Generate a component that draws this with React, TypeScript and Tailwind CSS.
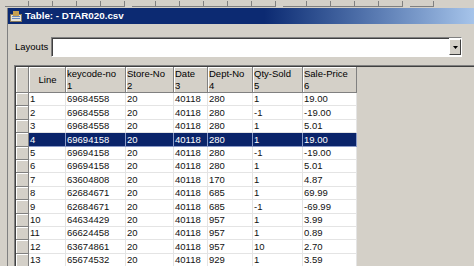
import React from 'react'

// column widths measured off the grid: selector, Line, then the six data fields
const COLS = [
  { name: 'keycode-no', no: '1', w: 'w-[60px]' },
  { name: 'Store-No', no: '2', w: 'w-[48px]' },
  { name: 'Date', no: '3', w: 'w-[34px]' },
  { name: 'Dept-No', no: '4', w: 'w-[45px]' },
  { name: 'Qty-Sold', no: '5', w: 'w-[50px]' },
  { name: 'Sale-Price', no: '6', w: 'w-[54px]' },
]

const ROWS: string[][] = [
  ['1', '69684558', '20', '40118', '280', '1', '19.00'],
  ['2', '69684558', '20', '40118', '280', '-1', '-19.00'],
  ['3', '69684558', '20', '40118', '280', '1', '5.01'],
  ['4', '69694158', '20', '40118', '280', '1', '19.00'],
  ['5', '69694158', '20', '40118', '280', '-1', '-19.00'],
  ['6', '69694158', '20', '40118', '280', '1', '5.01'],
  ['7', '63604808', '20', '40118', '170', '1', '4.87'],
  ['8', '62684671', '20', '40118', '685', '1', '69.99'],
  ['9', '62684671', '20', '40118', '685', '-1', '-69.99'],
  ['10', '64634429', '20', '40118', '957', '1', '3.99'],
  ['11', '66624458', '20', '40118', '957', '1', '0.89'],
  ['12', '63674861', '20', '40118', '957', '10', '2.70'],
  ['13', '65674532', '20', '40118', '929', '1', '3.59'],
]

const SELECTED = 3

function ToolbarStrip() {
  const groups = [5, 6, 5, 1]
  return (
    <div className="flex h-[7px] items-end gap-[7px] pl-[5px]">
      {groups.map((n, gi) => (
        <div key={gi} className="flex">
          {Array.from({ length: n }).map((_, i) => (
            <div key={i} className="h-[6px] w-[24px] border-b border-r border-b-[#808080] border-r-[#808080] bg-[#d4d0c8]" />
          ))}
        </div>
      ))}
    </div>
  )
}

function TitleBar() {
  return (
    <div className="flex h-[16px] items-center gap-[3px] bg-gradient-to-r from-[#0c2a72] from-55% to-[#a6c4ea] pl-[2px]">
      <svg width="12" height="12" viewBox="0 0 12 12">
        <rect x="0.5" y="4.5" width="11" height="7" fill="#e8e4d8" stroke="#8a7a5a" />
        <rect x="3" y="1" width="6" height="5" fill="#c8a050" />
        <rect x="2" y="6" width="8" height="1" fill="#6a8ac0" />
        <rect x="2" y="8" width="8" height="1" fill="#6a8ac0" />
      </svg>
      <span className="text-[9.8px] font-bold text-white">Table: - DTAR020.csv</span>
    </div>
  )
}

function LayoutsRow() {
  return (
    <div className="flex items-center gap-[4px] pl-[7px] pr-[12px] pt-[13px]">
      <span className="w-[32px] text-[9.5px] text-black">Layouts</span>
      <div className="flex h-[20px] flex-1 items-center border border-b-white border-l-[#808080] border-r-white border-t-[#808080] bg-white">
        <div className="h-full flex-1 border-l border-t border-[#404040]" />
        <div className="flex h-[16px] w-[12px] items-center justify-center border border-b-[#404040] border-l-white border-r-[#404040] border-t-white bg-[#d4d0c8]">
          <svg width="5" height="3" viewBox="0 0 5 3">
            <path d="M0 0h5L2.5 3z" fill="#000" />
          </svg>
        </div>
      </div>
    </div>
  )
}

function HeaderCell({ w, children, center }: { w: string; children: React.ReactNode; center?: boolean }) {
  return (
    <div
      className={`${w} flex h-full shrink-0 flex-col border-b border-r border-b-[#808080] border-r-[#808080] bg-[#d4d0c8] pl-[1px] leading-[12px] shadow-[inset_1px_1px_0_#fff] ${
        center ? 'items-center justify-center' : 'justify-center'
      }`}
    >
      {children}
    </div>
  )
}

function Grid() {
  return (
    <div className="ml-[6px] mt-[8px] flex flex-col border-l border-t border-[#808080]">
      <div className="flex flex-col border-l border-t border-[#404040]">
        <div className="flex h-[26px]">
          <HeaderCell w="w-[13px]">{''}</HeaderCell>
          <HeaderCell w="w-[37px]" center>
            <span>Line</span>
          </HeaderCell>
          {COLS.map(c => (
            <HeaderCell key={c.name} w={c.w}>
              <span>{c.name}</span>
              <span>{c.no}</span>
            </HeaderCell>
          ))}
        </div>
        {ROWS.map((r, ri) => {
          const sel = ri === SELECTED
          return (
            <div key={ri} className="flex h-[13.4px]">
              <div className="h-full w-[13px] shrink-0 border-b border-r border-b-[#808080] border-r-[#808080] bg-[#d4d0c8] shadow-[inset_1px_1px_0_#fff]" />
              {[
                { v: r[0], w: 'w-[37px]' },
                ...COLS.map((c, ci) => ({ v: r[ci + 1], w: c.w })),
              ].map((cell, ci) => (
                <div
                  key={ci}
                  className={`${cell.w} flex h-full shrink-0 items-center overflow-hidden border-b border-r pl-[1px] leading-none ${
                    sel
                      ? 'border-[#8a9ac8] bg-[#0a246a] text-white'
                      : 'border-[#e4e4e4] bg-white text-[#111]'
                  }`}
                >
                  {cell.v}
                </div>
              ))}
            </div>
          )
        })}
      </div>
    </div>
  )
}

export default function App() {
  return (
    <div className="h-[266px] w-[474px] overflow-hidden bg-[#d4d0c8] font-['Liberation_Sans',Arial,sans-serif] text-[9.5px] text-black">
      <ToolbarStrip />
      <div className="ml-[7px] mt-[1px] border-l border-[#808080]">
        <TitleBar />
        <LayoutsRow />
        <Grid />
      </div>
    </div>
  )
}
